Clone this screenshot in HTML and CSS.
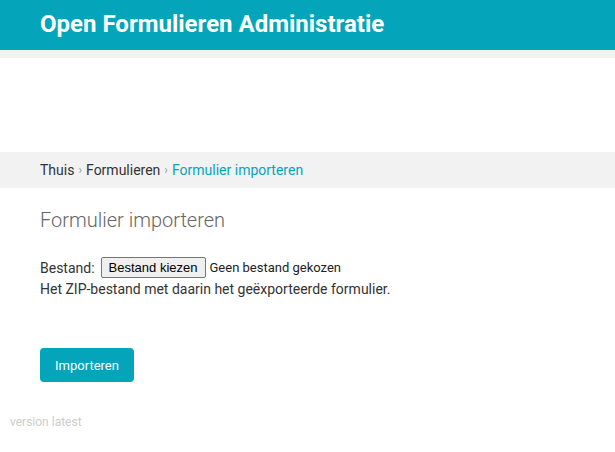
FILE: index.html
```html
<!DOCTYPE html>
<html lang="nl">
<head>
<meta charset="utf-8">
<title>Formulier importeren</title>
<link rel="stylesheet" href="styles.css">
</head>
<body>
<header class="header">
  <h1 class="brand">Open Formulieren Administratie</h1>
</header>
<div class="subbar"></div>
<div class="spacer"></div>
<nav class="breadcrumbs">
  <a class="crumb" href="#">Thuis</a><span class="sep">›</span><a class="crumb" href="#">Formulieren</a><span class="sep">›</span><span class="current">Formulier importeren</span>
</nav>
<main class="content">
  <h2 class="title">Formulier importeren</h2>
  <form class="form">
    <div class="field">
      <label class="label">Bestand:</label>
      <span class="file-btn">Bestand kiezen</span>
      <span class="file-name">Geen bestand gekozen</span>
    </div>
    <div class="help">Het ZIP-bestand met daarin het geëxporteerde formulier.</div>
    <div class="actions">
      <button type="button" class="submit">Importeren</button>
    </div>
  </form>
</main>
<footer class="footer">version latest</footer>
</body>
</html>
```
FILE: styles.css
```css
html, body {
  margin: 0;
  padding: 0;
  background: #fff;
}
body {
  font-family: Roboto, "Liberation Sans", sans-serif;
  font-size: 14px;
  color: #333;
}
.header {
  background: #04a5bb;
  height: 50px;
  padding: 0 40px;
  display: flex;
  align-items: center;
}
.brand {
  margin: 0;
  color: #fff;
  font-size: 24px;
  font-weight: 700;
  line-height: 1;
  padding-bottom: 3px;
}
.subbar {
  height: 8px;
  background: #f2f2f2;
}
.spacer {
  height: 94px;
}
.breadcrumbs {
  background: #f2f2f2;
  height: 36px;
  padding: 0 40px;
  display: flex;
  align-items: center;
  font-size: 14px;
}
.crumb {
  color: #333;
  text-decoration: none;
}
.sep {
  color: #999;
  font-size: 12px;
  margin: 0 4px;
}
.current {
  color: #04a5bb;
}
.content {
  padding: 20px 40px 0;
}
.title {
  margin: 0;
  font-size: 20px;
  font-weight: 300;
  color: #666;
  line-height: 24px;
}
.form {
  margin-top: 25px;
}
.field {
  display: flex;
  align-items: center;
  height: 21px;
}
.label {
  color: #333;
  margin-right: 6px;
}
.file-btn {
  font-family: "Liberation Sans", Arial, sans-serif;
  font-size: 13px;
  color: #000;
  background: #efefef;
  border: 1px solid #767676;
  border-radius: 2px;
  padding: 0 7px;
  height: 19px;
  line-height: 19px;
  margin-right: 4px;
}
.file-name {
  font-family: Roboto, "Liberation Sans", sans-serif;
  font-size: 13px;
  color: #222;
}
.help {
  margin-top: 1px;
  line-height: 20px;
}
.actions {
  margin-top: 49px;
}
.submit {
  background: #04a5bb;
  color: #fff;
  border: none;
  border-radius: 4px;
  font-family: Roboto, "Liberation Sans", sans-serif;
  font-size: 13px;
  height: 34px;
  width: 94px;
  padding: 0;
}
.footer {
  margin-top: 33px;
  padding: 0 10px;
  font-size: 12px;
  color: #ccc;
}
```
